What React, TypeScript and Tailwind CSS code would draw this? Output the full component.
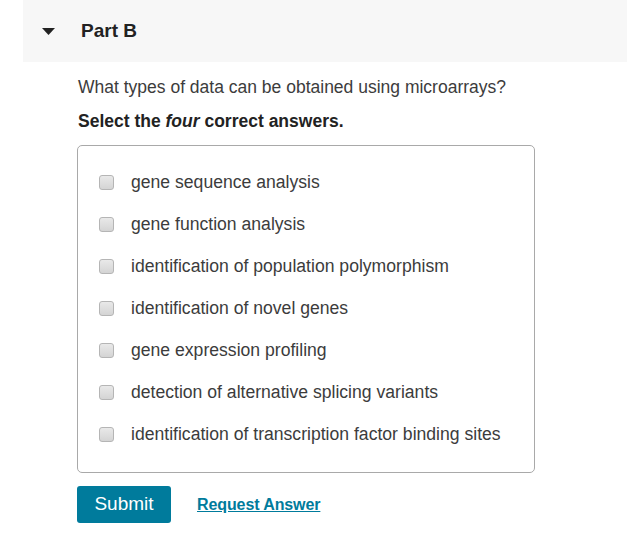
import React from "react";

const options = [
  "gene sequence analysis",
  "gene function analysis",
  "identification of population polymorphism",
  "identification of novel genes",
  "gene expression profiling",
  "detection of alternative splicing variants",
  "identification of transcription factor binding sites",
];

export default function App() {
  return (
    <div className="w-[627px] h-[542px] bg-white text-[#333] font-['Liberation_Sans',Arial,sans-serif]">
      <div className="ml-[23px] h-[62px] bg-[#f7f7f7] flex items-center">
        <svg width="13" height="7" viewBox="0 0 13 7" className="ml-[19px] mt-[1px]">
          <polygon points="0,0 13,0 6.5,7" fill="#222" />
        </svg>
        <span className="ml-[26px] text-[19px] font-bold text-[#222]">Part B</span>
      </div>
      <div className="pl-[78px] pt-[15px]">
        <p className="text-[17.5px] leading-[20px] text-[#3c3c3c]">What types of data can be obtained using microarrays?</p>
        <p className="mt-[14px] text-[17.5px] leading-[20px] font-bold text-[#222]">
          Select the <i>four</i> correct answers.
        </p>
        <div className="mt-[14px] -ml-px w-[458px] h-[328px] border border-[#a9a9a9] rounded-[5px] pt-[25px] pl-[21px] flex flex-col">
          {options.map((o) => (
            <div key={o} className="h-[42px] flex items-start">
              <span className="mt-[4px] w-[15px] h-[15px] rounded-[3px] border border-[#b5b5b5] bg-gradient-to-b from-[#e9e9e9] to-[#d4d4d4]" />
              <span className="ml-[17px] text-[17.6px] leading-[22px] text-[#3c3c3c]">{o}</span>
            </div>
          ))}
        </div>
        <div className="mt-[13px] -ml-px flex items-center">
          <button className="w-[94px] h-[37px] bg-[#007b9c] text-white text-[19px] rounded-[3px]">Submit</button>
          <a href="#" className="ml-[26px] text-[16px] tracking-[-0.1px] font-bold text-[#007b9c] underline">Request Answer</a>
        </div>
      </div>
    </div>
  );
}
